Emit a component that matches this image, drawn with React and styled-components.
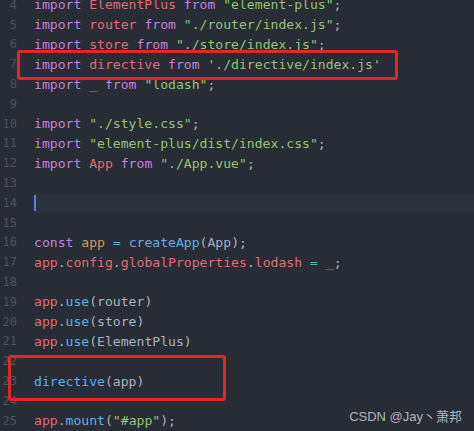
import React from "react";
import styled, { createGlobalStyle } from "styled-components";

const Global = createGlobalStyle`
  html, body { margin: 0; padding: 0; background: #282c34; }
  #root { width: 474px; height: 431px; overflow: hidden; }
`;

const Editor = styled.div`
  position: relative;
  width: 474px;
  height: 431px;
  overflow: hidden;
  background: #282c34;
  font-family: "DejaVu Sans Mono", "Liberation Mono", monospace;
`;

const Lines = styled.div`
  margin-top: -5px;
  display: flex;
  flex-direction: column;
`;

const Row = styled.div`
  display: grid;
  grid-template-columns: 17px 1fr;
  column-gap: 17px;
  height: 19.8px;
  align-items: center;
`;

const Num = styled.span`
  text-align: right;
  font-size: 12px;
  color: #4b5263;
`;

const Code = styled.span`
  position: relative;
  font-size: 13.1px;
  white-space: pre;
  color: #abb2bf;
  height: 100%;
  display: flex;
  align-items: center;
  background: ${(p) => (p.$current ? "#2c313b" : "transparent")};
`;

const Cursor = styled.span`
  position: absolute;
  left: 0;
  top: 2px;
  width: 2px;
  height: 16px;
  background: #5a7fe0;
`;

const C = {
  k: "#c383dd",
  v: "#e06c75",
  s: "#98c379",
  p: "#abb2bf",
  f: "#61afef",
  o: "#d19a66",
  op: "#56b6c2",
};

const Tok = styled.span`
  color: ${(p) => C[p.$t] || "#abb2bf"};
`;

const Box = styled.div`
  position: absolute;
  left: ${(p) => p.$x}px;
  top: ${(p) => p.$y}px;
  width: ${(p) => p.$w}px;
  height: ${(p) => p.$h}px;
  box-sizing: border-box;
  border: 3px solid #e3262a;
  border-radius: 3px;
`;

const Watermark = styled.div`
  position: absolute;
  right: 12px;
  bottom: 6px;
  font-family: "Liberation Sans", "Noto Sans CJK SC", sans-serif;
  font-size: 13px;
  color: #c9cbcf;
  opacity: 0.85;
`;

const lines = [
  [4, [["k", "import "], ["v", "ElementPlus "], ["k", "from "], ["s", '"element-plus"'], ["p", ";"]]],
  [5, [["k", "import "], ["v", "router "], ["k", "from "], ["s", '"./router/index.js"'], ["p", ";"]]],
  [6, [["k", "import "], ["v", "store "], ["k", "from "], ["s", '"./store/index.js"'], ["p", ";"]]],
  [7, [["k", "import "], ["v", "directive "], ["k", "from "], ["s", "'./directive/index.js'"]]],
  [8, [["k", "import "], ["v", "_ "], ["k", "from "], ["s", '"lodash"'], ["p", ";"]]],
  [9, []],
  [10, [["k", "import "], ["s", '"./style.css"'], ["p", ";"]]],
  [11, [["k", "import "], ["s", '"element-plus/dist/index.css"'], ["p", ";"]]],
  [12, [["k", "import "], ["v", "App "], ["k", "from "], ["s", '"./App.vue"'], ["p", ";"]]],
  [13, []],
  [14, [], true],
  [15, []],
  [16, [["k", "const "], ["o", "app "], ["op", "= "], ["f", "createApp"], ["p", "(App);"]]],
  [17, [["v", "app"], ["p", "."], ["v", "config"], ["p", "."], ["v", "globalProperties"], ["p", "."], ["v", "lodash "], ["op", "= "], ["v", "_"], ["p", ";"]]],
  [18, []],
  [19, [["v", "app"], ["p", "."], ["f", "use"], ["p", "(router)"]]],
  [20, [["v", "app"], ["p", "."], ["f", "use"], ["p", "(store)"]]],
  [21, [["v", "app"], ["p", "."], ["f", "use"], ["p", "(ElementPlus)"]]],
  [22, []],
  [23, [["f", "directive"], ["p", "(app)"]]],
  [24, []],
  [25, [["v", "app"], ["p", "."], ["f", "mount"], ["p", "("], ["s", '"#app"'], ["p", ");"]]],
];

export default function App() {
  return (
    <>
      <Global />
      <Editor>
        <Lines>
          {lines.map(([n, toks, cur]) => (
            <Row key={n}>
              <Num>{n}</Num>
              <Code $current={cur}>
                {cur && <Cursor />}
                {toks.map(([t, s], i) => (
                  <Tok key={i} $t={t}>{s}</Tok>
                ))}
              </Code>
            </Row>
          ))}
        </Lines>
        <Box $x={17} $y={50} $w={381} $h={30} />
        <Box $x={8} $y={355} $w={218} $h={46} />
        <Watermark>CSDN @Jay丶萧邦</Watermark>
      </Editor>
    </>
  );
}
